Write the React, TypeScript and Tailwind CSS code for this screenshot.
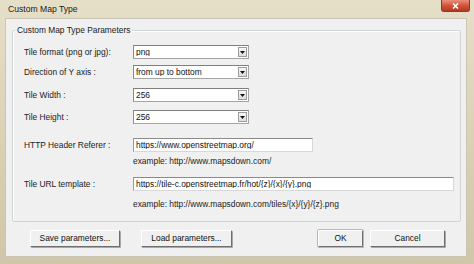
import React from 'react'

const font = { fontFamily: '"Liberation Sans", Arial, sans-serif' }

function Select({ value }: { value: string }) {
  return (
    <div className="flex h-[14px] w-[116px] items-center border border-[#a4a4a4] border-t-[#7f7f7f] border-l-[#8a8a8a] bg-white">
      <span className="flex-1 truncate pl-[2px] leading-none text-[#111]">{value}</span>
      <span className="mr-[1px] flex h-[10px] w-[9px] items-center justify-center border border-[#9c9c9c] bg-gradient-to-b from-[#f6f6f6] to-[#dedede]">
        <svg width="5" height="3" viewBox="0 0 5 3">
          <path d="M0 0h5L2.5 3z" fill="#111" />
        </svg>
      </span>
    </div>
  )
}

function TextBox({ value, w }: { value: string; w: string }) {
  return (
    <div className={`flex h-[14px] items-center border border-[#d8d8d8] border-t-[#8a8a8a] border-l-[#9a9a9a] bg-white ${w}`}>
      <span className="truncate pl-[2px] leading-none text-[#111]">{value}</span>
    </div>
  )
}

function Row({ label, mt, children }: { label: string; mt: string; children: React.ReactNode }) {
  return (
    <div className={`flex items-center ${mt}`}>
      <span className="w-[109px] shrink-0 leading-none text-[#222]">{label}</span>
      {children}
    </div>
  )
}

function Btn({ label, w, ml, def }: { label: string; w: string; ml: string; def?: boolean }) {
  return (
    <button
      className={`flex h-[17px] items-center justify-center rounded-[1px] border border-white border-r-[#6f6f6f] border-b-[#6f6f6f] bg-[#f0f0f0] leading-none text-[#111] shadow-[1px_1px_0_#a8a8a8] ${w} ${ml} ${
        def ? 'outline outline-1 outline-[#b8b8b8]' : ''
      }`}
    >
      {label}
    </button>
  )
}

export default function App() {
  return (
    <div
      className="flex h-[264px] w-[474px] flex-col bg-gradient-to-b from-[#e6dfc8] via-[#dbd2b6] to-[#d0c7aa] text-[8.4px]"
      style={font}
    >
      {/* title bar */}
      <div className="relative flex h-[18px] items-center pl-[8px]">
        <span className="text-[8.6px] leading-none text-[#1a1a1a]">Custom Map Type</span>
        <div className="absolute right-[4px] top-0 flex h-[12px] w-[29px] items-center justify-center rounded-b-[3px] border border-t-0 border-[#8a3a2c] bg-gradient-to-b from-[#e9907c] via-[#d2543c] to-[#b33a22]">
          <svg width="7" height="6" viewBox="0 0 7 6">
            <path d="M1 0.5l5 5M6 0.5l-5 5" stroke="#fff" strokeWidth="1.6" />
          </svg>
        </div>
      </div>

      {/* client area */}
      <div className="ml-[5px] flex h-[239px] w-[462px] flex-col border border-[#c9c4b4] bg-[#f0f0f0]">
        <div className="relative ml-[6px] mt-[11px] flex h-[192px] w-[449px] flex-col rounded-[2px] border border-[#cfd4d8] pl-[11px] shadow-[inset_1px_1px_0_#fff]">
          <span className="absolute left-[2px] top-[-5px] bg-[#f0f0f0] px-[2px] leading-none text-[#1a1a1a]">
            Custom Map Type Parameters
          </span>

          <Row label="Tile format (png or jpg):" mt="mt-[14px]">
            <Select value="png" />
          </Row>
          <Row label="Direction of Y axis :" mt="mt-[6px]">
            <Select value="from up to bottom" />
          </Row>
          <Row label="Tile Width :" mt="mt-[9px]">
            <Select value="256" />
          </Row>
          <Row label="Tile Height :" mt="mt-[8px]">
            <Select value="256" />
          </Row>
          <Row label="HTTP Header Referer :" mt="mt-[14px]">
            <TextBox value="https://www.openstreetmap.org/" w="w-[180px]" />
          </Row>
          <div className="mt-[3px] flex h-[12px] items-center pl-[109px] leading-none text-[#222]">
            example: http://www.mapsdown.com/
          </div>
          <Row label="Tile URL template :" mt="mt-[10px]">
            <TextBox value="https://tile-c.openstreetmap.fr/hot/{z}/{x}/{y}.png" w="w-[321px]" />
          </Row>
          <div className="mt-[7px] flex h-[12px] items-center pl-[109px] leading-none text-[#222]">
            example: http://www.mapsdown.com/tiles/{'{x}'}/{'{y}'}/{'{z}'}.png
          </div>
        </div>

        <div className="mt-[8px] flex">
          <Btn label="Save parameters..." w="w-[90px]" ml="ml-[24px]" />
          <Btn label="Load parameters..." w="w-[91px]" ml="ml-[21px]" />
          <Btn label="OK" w="w-[45px]" ml="ml-[86px]" def />
          <Btn label="Cancel" w="w-[75px]" ml="ml-[7px]" />
        </div>
      </div>
    </div>
  )
}
